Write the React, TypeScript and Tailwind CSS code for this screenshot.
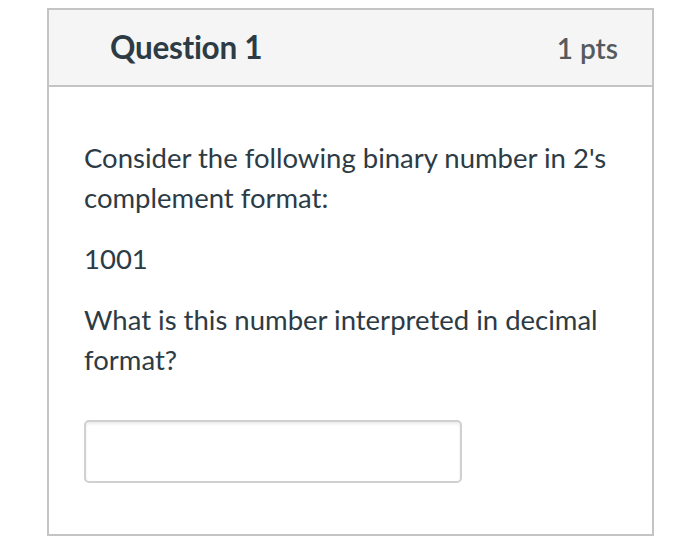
import React from "react";

export default function App() {
  return (
    <div className="w-[700px] h-[539px] bg-white pt-[8px] pl-[47px]" style={{ fontFamily: "Lato, 'Noto Sans', sans-serif" }}>
      <div className="w-[607px] h-[528px] border-2 border-[#c4c4c4] flex flex-col">
        <div className="h-[77px] shrink-0 bg-[#f5f5f5] border-b-2 border-[#c4c4c4] flex items-center justify-between pl-[61px] pr-[34px]">
          <span className="text-[31.5px] font-bold text-[#2d3b45] tracking-[-0.3px]">Question 1</span>
          <span className="text-[28px] font-semibold text-[#555a5e]">1 pts</span>
        </div>
        <div className="pl-[35px] pr-[30px] pt-[51px] text-[27.5px] leading-[40px] text-[#2d3b45]">
          <p>Consider the following binary number in 2's complement format:</p>
          <p className="mt-[21px]">1001</p>
          <p className="mt-[21px]">What is this number interpreted in decimal format?</p>
          <div className="mt-[40px] w-[378px] h-[63px] rounded-[5px] border-2 border-[#d0d0d0] shadow-[inset_0_2px_3px_rgba(0,0,0,0.08)]" />
        </div>
      </div>
    </div>
  );
}
